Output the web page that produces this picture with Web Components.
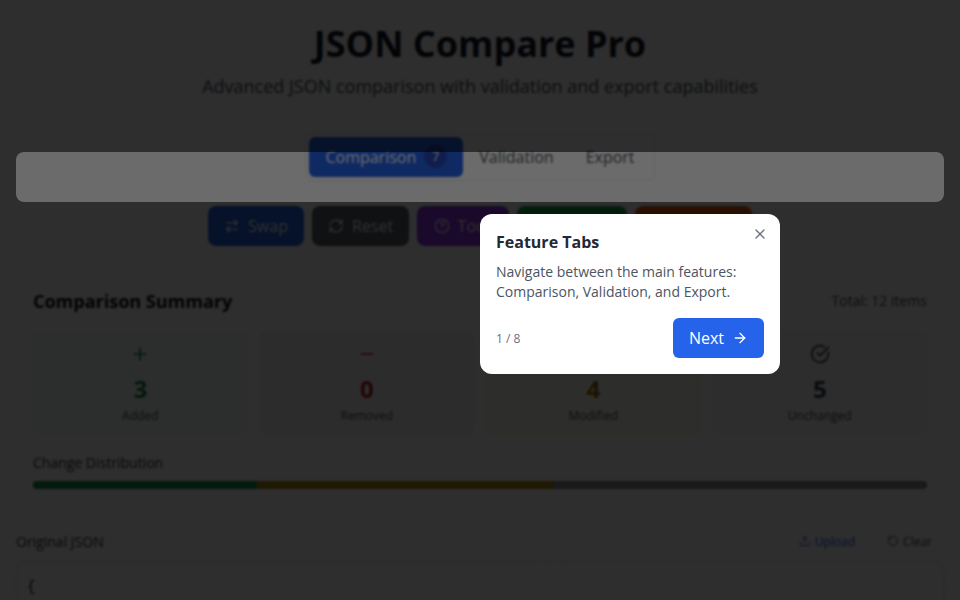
<!DOCTYPE html>
<html lang="en"><head><meta charset="utf-8"><title>JSON Compare Pro</title>
<style>
html,body{margin:0;height:600px;overflow:hidden}
body{background:#fff;font-family:"Open Sans","Liberation Sans",sans-serif;color:#111827}
</style></head><body>
<compare-app>
  <app-header title="JSON Compare Pro" sub="Advanced JSON comparison with validation and export capabilities"></app-header>
  <tab-bar>
    <tab-item active count="7">Comparison</tab-item>
    <tab-item>Validation</tab-item>
    <tab-item>Export</tab-item>
  </tab-bar>
  <action-row>
    <action-btn color="#2563eb" icon="swap" w="96">Swap</action-btn>
    <action-btn color="#5a606c" icon="reset" w="97">Reset</action-btn>
    <action-btn color="#9333ea" icon="help" w="92">Tour</action-btn>
    <action-btn color="#16a34a" w="110"></action-btn>
    <action-btn color="#ea580c" w="117"></action-btn>
  </action-row>
  <summary-card>
    <stat-tile tone="added" icon="plus" value="3" label="Added"></stat-tile>
    <stat-tile tone="removed" icon="minus" value="0" label="Removed"></stat-tile>
    <stat-tile tone="modified" value="4" label="Modified"></stat-tile>
    <stat-tile tone="same" icon="check" value="5" label="Unchanged"></stat-tile>
  </summary-card>
  <json-panel label="Original JSON">{</json-panel>
</compare-app>
<tour-overlay>
  <tour-pop heading="Feature Tabs" step="1 / 8">Navigate between the main features: Comparison, Validation, and Export.</tour-pop>
</tour-overlay>
<script>
const ICONS={
 swap:'<path d="m16 3 4 4-4 4"/><path d="M20 7H4"/><path d="m8 21-4-4 4-4"/><path d="M4 17h16"/>',
 reset:'<path d="M3 12a9 9 0 0 1 9-9 9.75 9.75 0 0 1 6.74 2.74L21 8"/><path d="M21 3v5h-5"/><path d="M21 12a9 9 0 0 1-9 9 9.75 9.75 0 0 1-6.74-2.74L3 16"/><path d="M8 16H3v5"/>',
 help:'<circle cx="12" cy="12" r="10"/><path d="M9.09 9a3 3 0 0 1 5.83 1c0 2-3 3-3 3"/><path d="M12 17h.01"/>',
 plus:'<path d="M5 12h14"/><path d="M12 5v14"/>',
 minus:'<path d="M5 12h14"/>',
 check:'<path d="M21.801 10A10 10 0 1 1 17 3.335"/><path d="m9 11 3 3L22 4"/>',
 upload:'<path d="M21 15v4a2 2 0 0 1-2 2H5a2 2 0 0 1-2-2v-4"/><path d="M17 8l-5-5-5 5"/><path d="M12 3v12"/>',
 undo:'<path d="M3 12a9 9 0 1 0 9-9 9.75 9.75 0 0 0-6.74 2.74L3 8"/><path d="M3 3v5h5"/>',
 x:'<path d="M18 6 6 18"/><path d="m6 6 12 12"/>',
 arrow:'<path d="M5 12h14"/><path d="m12 5 7 7-7 7"/>'
};
const svg=(n,s)=>`<svg width="${s}" height="${s}" viewBox="0 0 24 24" fill="none" stroke="currentColor" stroke-width="2" stroke-linecap="round" stroke-linejoin="round" style="display:block;flex:none">${ICONS[n]||''}</svg>`;
function def(name,render){customElements.define(name,class extends HTMLElement{constructor(){super();this.attachShadow({mode:'open'})}connectedCallback(){this.shadowRoot.innerHTML=render(this)}})}
const a=(e,k)=>e.getAttribute(k)||'';

def('compare-app',()=>`<style>:host{display:block;padding:24px 16px 0;box-sizing:border-box}</style><slot></slot>`);
def('app-header',e=>`<style>:host{display:block;text-align:center}
h1{margin:0;font-size:36px;line-height:40px;font-weight:700;color:#111827}
p{margin:8px 0 0;font-size:18px;line-height:28px;color:#4b5563}</style><h1>${a(e,'title')}</h1><p>${a(e,'sub')}</p>`);
def('tab-bar',()=>`<style>:host{display:flex;width:max-content;margin:33px auto 0;padding:3px;background:#fff;border:1px solid #e5e7eb;border-radius:8px;gap:0}</style><slot></slot>`);
def('tab-item',e=>{const on=e.hasAttribute('active');return `<style>:host{display:flex;align-items:center;gap:8px;height:40px;padding:0 16px;box-sizing:border-box;border-radius:6px;font-size:16px;background:${on?'#2563eb':'transparent'};color:${on?'#fff':'#4b5563'}}
b{font-weight:400;font-size:12px;width:23px;height:23px;border-radius:50%;background:#2848b8;color:#fff;display:flex;align-items:center;justify-content:center;margin-top:-2px}</style><slot></slot>${a(e,'count')?`<b>${a(e,'count')}</b>`:''}`});
def('action-row',()=>`<style>:host{display:flex;justify-content:center;gap:8px;margin-top:25px}</style><slot></slot>`);
def('action-btn',e=>`<style>:host{display:flex;align-items:center;justify-content:center;gap:8px;width:${a(e,'w')}px;height:40px;box-sizing:border-box;border-radius:8px;background:${a(e,'color')};color:#fff;font-size:16px}</style>${a(e,'icon')?svg(a(e,'icon'),16):''}<slot></slot>`);
def('summary-card',()=>`<style>:host{display:block;margin-top:24px;padding:17px 17px 0;height:236px;box-sizing:border-box;background:#fff;border-radius:8px}
.h{display:flex;justify-content:space-between;align-items:center;height:28px}
h2{margin:0;font-size:18px;line-height:28px;font-weight:700;color:#111827}
.t{font-size:14px;color:#4b5563;padding-bottom:2px}
.g{display:grid;grid-template-columns:repeat(4,1fr);gap:12px;margin-top:16px}
.d{font-size:14px;line-height:20px;color:#374151;margin-top:18px}
.bar{display:flex;height:8px;border-radius:4px;overflow:hidden;background:#8b8f96;margin-top:8px}
.bar i{display:block}</style>
<div class="h"><h2>Comparison Summary</h2><span class="t">Total: 12 items</span></div>
<div class="g"><slot></slot></div>
<div class="d">Change Distribution</div>
<div class="bar"><i style="width:25%;background:#1f9455"></i><i style="width:33.33%;background:#a88a10"></i></div>`);
const T={added:['#f5fdf8','#15803d','#e6fbee'],removed:['#fdf6f6','#b91c1c','#fbe8e8'],modified:['#fdfcee','#a16207','#fcf8d2'],same:['#fafafa','#374151','#f3f4f6']};
def('stat-tile',e=>{const [bg,c,bd]=T[a(e,'tone')];return `<style>:host{display:flex;flex-direction:column;align-items:center;height:104px;box-sizing:border-box;padding-top:10px;background:${bg};border:1px solid ${bd};border-radius:8px;color:${c}}
.i{height:24px;display:flex;align-items:center}.v{font-size:24px;line-height:32px;font-weight:700;margin-top:7px}.l{font-size:12px;line-height:16px;color:#4b5563;margin-top:3px}</style>
<div class="i">${a(e,'icon')?svg(a(e,'icon'),20):''}</div><div class="v">${a(e,'value')}</div><div class="l">${a(e,'label')}</div>`});
def('json-panel',e=>`<style>:host{display:block;margin-top:23px}
.h{display:flex;align-items:center;height:24px;gap:8px}
.n{font-size:14px;color:#374151;flex:1}
.b{display:flex;align-items:center;gap:4px;font-size:12px;padding:0 12px;color:#4b5563}
.u{color:#2563eb}
.box{margin-top:9px;border:1px dashed #d1d5db;border-radius:8px;background:#fff;height:120px;padding:14px 10px;box-sizing:border-box;font:14px/20px "Liberation Mono",monospace;color:#111827}</style>
<div class="h"><span class="n">${a(e,'label')}</span><span class="b u">${svg('upload',12)}Upload</span><span class="b">${svg('undo',12)}Clear</span></div>
<div class="box"><slot></slot></div>`);
def('tour-overlay',()=>`<style>:host{position:fixed;inset:0;display:block;overflow:hidden}
.dim{position:absolute;inset:0;background:rgba(0,0,0,.58);backdrop-filter:blur(1px)}
.spot{position:absolute;left:16px;top:152px;width:928px;height:50px;border-radius:8px;box-shadow:0 0 0 2000px rgba(0,0,0,.57)}</style>
<div class="dim"></div><div class="spot"></div><slot></slot>`);
def('tour-pop',e=>`<style>:host{position:absolute;left:480px;top:214px;width:300px;height:160px;box-sizing:border-box;padding:16px;background:#fff;border-radius:12px;display:flex;flex-direction:column;color:#4b5563}
h3{margin:0;font-size:16px;line-height:24px;font-weight:700;color:#1f2937}
p{margin:8px 0 0;font-size:14px;line-height:20px}
.x{position:absolute;right:12px;top:12px;color:#6b7280}
.f{display:flex;justify-content:space-between;align-items:center;margin-top:16px}
.s{font-size:12px;color:#6b7280}
.n{display:flex;align-items:center;gap:8px;width:91px;height:40px;justify-content:center;border-radius:6px;background:#2563eb;color:#fff;font-size:16px}</style>
<div class="x">${svg('x',16)}</div><h3>${a(e,'heading')}</h3><p><slot></slot></p>
<div class="f"><span class="s">${a(e,'step')}</span><span class="n">Next${svg('arrow',16)}</span></div>`);
</script>
</body></html>
